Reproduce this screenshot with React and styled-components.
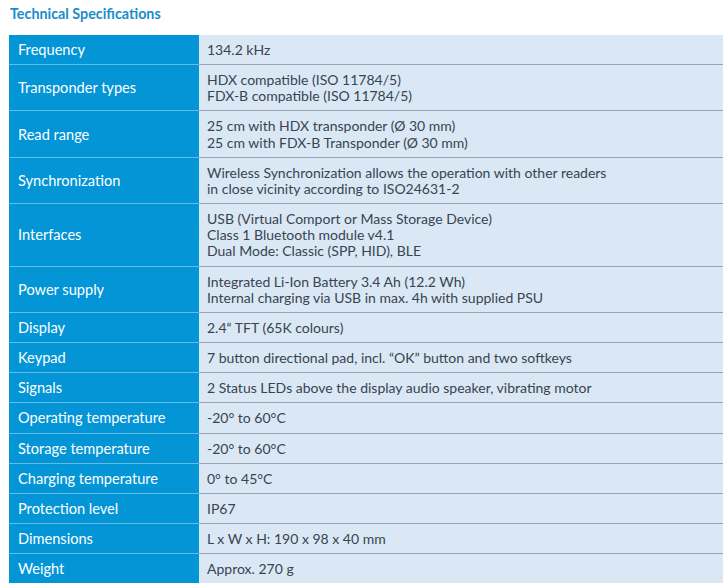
import React from "react";
import styled, { createGlobalStyle } from "styled-components";

const Global = createGlobalStyle`
  html, body { margin: 0; padding: 0; background: #ffffff; }
  body { font-family: Lato, "Liberation Sans", Arial, sans-serif; }
`;

const Page = styled.div`
  padding: 6px 4px 0 9px;
  width: 714px;
`;

const Title = styled.h2`
  margin: 0 0 13px 1px;
  font-size: 14.3px;
  line-height: 16px;
  font-weight: 700;
  color: #1b8dcc;
`;

const Table = styled.div`
  display: flex;
  flex-direction: column;
`;

const Row = styled.div`
  display: grid;
  grid-template-columns: 190px 1fr;
`;

const Label = styled.div`
  background: #0395d6;
  color: #ffffff;
  font-size: 14.6px;
  line-height: 16.15px;
  padding: 7px 9px 6px 9px;
  border-bottom: 1px solid #62bce6;
  display: flex;
  align-items: center;
`;

const Value = styled.div`
  background: #dae8f5;
  color: #38444f;
  font-size: 14px;
  line-height: 16.15px;
  padding: 7px 8px 6px 8px;
  border-bottom: 1px solid #97a3ae;
  white-space: pre-line;
`;

const specs = [
  ["Frequency", "134.2 kHz"],
  ["Transponder types", "HDX compatible (ISO 11784/5)\nFDX-B compatible (ISO 11784/5)"],
  ["Read range", "25 cm with HDX transponder (Ø 30 mm)\n25 cm with FDX-B Transponder (Ø 30 mm)"],
  ["Synchronization", "Wireless Synchronization allows the operation with other readers\nin close vicinity according to ISO24631-2"],
  ["Interfaces", "USB (Virtual Comport or Mass Storage Device)\nClass 1 Bluetooth module v4.1\nDual Mode: Classic (SPP, HID), BLE"],
  ["Power supply", "Integrated Li-Ion Battery 3.4 Ah (12.2 Wh)\nInternal charging via USB in max. 4h with supplied PSU"],
  ["Display", "2.4“ TFT (65K colours)"],
  ["Keypad", "7 button directional pad, incl. “OK” button and two softkeys"],
  ["Signals", "2 Status LEDs above the display audio speaker, vibrating motor"],
  ["Operating temperature", "-20° to 60°C"],
  ["Storage temperature", "-20° to 60°C"],
  ["Charging temperature", "0° to 45°C"],
  ["Protection level", "IP67"],
  ["Dimensions", "L x W x H: 190 x 98 x 40 mm"],
  ["Weight", "Approx. 270 g"],
];

export default function App() {
  return (
    <>
      <Global />
      <Page>
        <Title>Technical Specifications</Title>
        <Table>
          {specs.map(([k, v]) => (
            <Row key={k}>
              <Label>{k}</Label>
              <Value>{v}</Value>
            </Row>
          ))}
        </Table>
      </Page>
    </>
  );
}
